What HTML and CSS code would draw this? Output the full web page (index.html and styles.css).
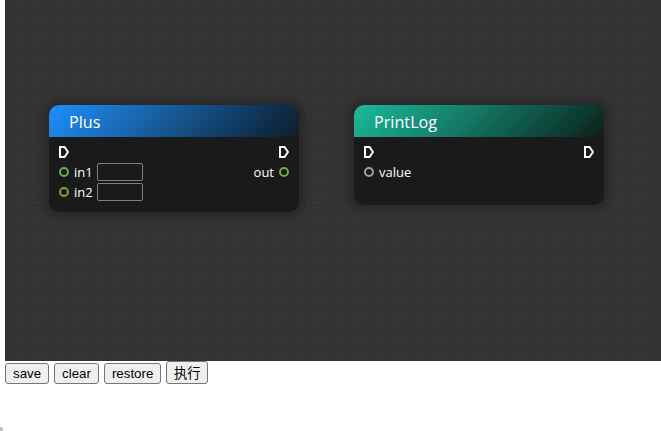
FILE: index.html
```html
<!DOCTYPE html>
<html>
<head>
    <title>Blueprint Editor</title>
    <meta charset="UTF-8">
    <link rel="stylesheet" href="styles.css">
</head>
<body>
    <div class="canvas">
        <!-- Plus node -->
        <div class="node node-plus">
            <div class="node-title title-plus">Plus</div>
            <div class="node-body">
                <div class="pin-row exec-row">
                    <svg class="exec" viewBox="0 0 10 12"><path d="M1 1H5.5L9 6L5.5 11H1Z"/></svg>
                    <svg class="exec" viewBox="0 0 10 12"><path d="M1 1H5.5L9 6L5.5 11H1Z"/></svg>
                </div>
                <div class="pin-row">
                    <div class="pin-group">
                        <span class="pin pin-green"></span>
                        <span class="pin-label">in1</span>
                        <input class="pin-input" type="text">
                    </div>
                    <div class="pin-group">
                        <span class="pin-label">out</span>
                        <span class="pin pin-green"></span>
                    </div>
                </div>
                <div class="pin-row">
                    <div class="pin-group">
                        <span class="pin pin-green"></span>
                        <span class="pin-label">in2</span>
                        <input class="pin-input" type="text">
                    </div>
                </div>
            </div>
        </div>

        <!-- PrintLog node -->
        <div class="node node-print">
            <div class="node-title title-print">PrintLog</div>
            <div class="node-body">
                <div class="pin-row exec-row">
                    <svg class="exec" viewBox="0 0 10 12"><path d="M1 1H5.5L9 6L5.5 11H1Z"/></svg>
                    <svg class="exec" viewBox="0 0 10 12"><path d="M1 1H5.5L9 6L5.5 11H1Z"/></svg>
                </div>
                <div class="pin-row">
                    <div class="pin-group">
                        <span class="pin pin-gray"></span>
                        <span class="pin-label">value</span>
                    </div>
                </div>
            </div>
        </div>
    </div>

    <div class="toolbar">
        <button>save</button>
        <button>clear</button>
        <button>restore</button>
        <button class="run-btn">执行</button>
    </div>

    <div class="corner"></div>
</body>
</html>
```

FILE: styles.css
```css
body {
    margin: 0;
    padding-left: 5px;
    font-family: "Liberation Sans", Arial, "Noto Sans CJK SC", sans-serif;
    background-color: #fff;
}

.canvas {
    position: relative;
    height: 361px;
    overflow: hidden;
    background-color: #333;
    background-image: radial-gradient(#393939 1px, transparent 1px);
    background-size: 5px 5px;
}

.node {
    position: absolute;
    width: 250px;
    border-radius: 10px;
    background-color: #1a1a1a;
    box-shadow: 0 0 6px 6px rgba(40, 40, 40, 0.8);
    color: #fff;
    font-family: "Open Sans", sans-serif;
    overflow: hidden;
}

.node-plus {
    left: 44px;
    top: 105px;
    height: 107px;
}

.node-print {
    left: 349px;
    top: 105px;
    height: 100px;
}

.node-title {
    height: 32px;
    line-height: 34px;
    padding-left: 20px;
    font-size: 16.2px;
}

.title-plus {
    background: linear-gradient(135deg, #1e90ff 0%, #17568f 50%, #0e2c4a 85%, #141c24 100%);
}

.title-print {
    background: linear-gradient(135deg, #1abc9c 0%, #13705e 50%, #0c3a30 85%, #141c1a 100%);
}

.node-body {
    padding: 4px 10px 0;
}

.pin-row {
    display: flex;
    justify-content: space-between;
    align-items: center;
    height: 20px;
}

.exec-row {
    height: 21px;
}

.pin-group {
    display: flex;
    align-items: center;
    gap: 5px;
}

.exec {
    width: 10px;
    height: 12px;
}

.exec path {
    fill: none;
    stroke: #fff;
    stroke-width: 2;
}

.pin {
    width: 10px;
    height: 10px;
    border-radius: 50%;
    border: 2px solid;
    box-sizing: border-box;
}

.pin-green {
    border-color: #70ab44;
}

.pin-gray {
    border-color: #a0a0a0;
}

.pin-label {
    font-size: 13px;
}

.pin-input {
    width: 46px;
    height: 18px;
    box-sizing: border-box;
    margin-left: -1px;
    border: 1px solid #808080;
    border-radius: 2px;
    background: transparent;
}

.toolbar {
    display: flex;
    align-items: flex-end;
    gap: 5px;
    height: 23px;
}

.toolbar button {
    height: 21px;
    padding: 0 7px;
    font-family: inherit;
    font-size: 13.3px;
    border: 1px solid #767676;
    border-radius: 3px;
    background-color: #efefef;
    color: #000;
}

.toolbar .run-btn {
    width: 42px;
    height: 23px;
    padding: 0;
}

.corner {
    position: fixed;
    left: 0;
    bottom: 0;
    width: 3px;
    height: 4px;
    border-top-right-radius: 3px;
    background-color: #bbb;
}
```
